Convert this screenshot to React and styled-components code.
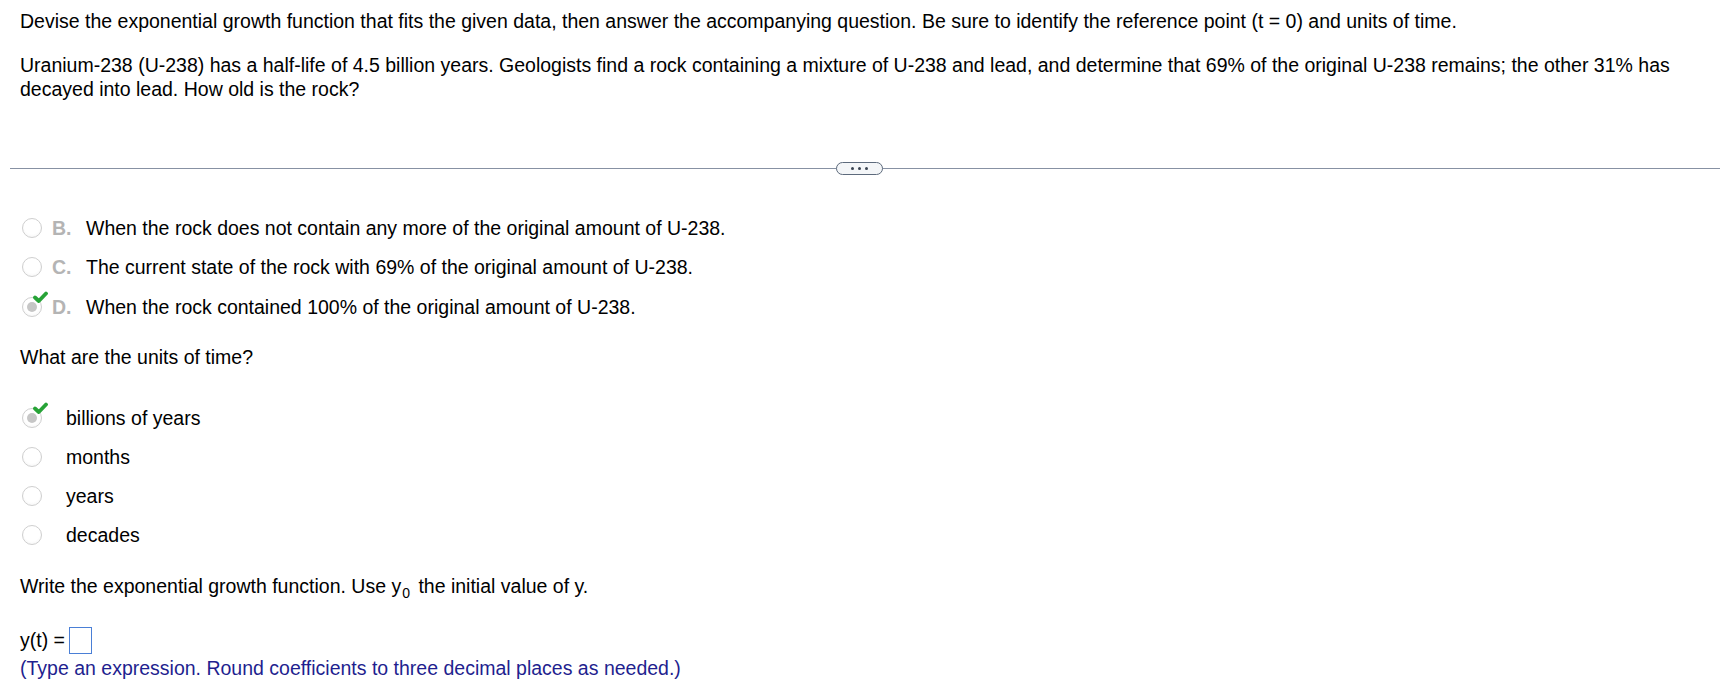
import React from "react";
import styled, { createGlobalStyle } from "styled-components";

const Global = createGlobalStyle`
  html, body { margin: 0; padding: 0; background: #fff; }
  body { font-family: "Liberation Sans", Arial, sans-serif; color: #000; }
`;

const Page = styled.div`
  padding: 9px 20px 0 20px;
  font-size: 19.5px;
  line-height: 24px;
  overflow: hidden;
  height: 679px;
  box-sizing: border-box;
`;

const Para = styled.p`
  margin: ${(p) => p.$mt || 0}px 0 ${(p) => p.$mb || 0}px 0;
`;

const DividerRow = styled.div`
  position: relative;
  margin: 61px -20px 0 -10px;
  height: 13px;
  display: flex;
  align-items: center;
`;

const Line = styled.div`
  flex: 1;
  height: 1px;
  background: #8791a3;
`;

const Pill = styled.button`
  position: absolute;
  left: 826px;
  top: 0;
  width: 47px;
  height: 13px;
  box-sizing: border-box;
  border: 1.5px solid #5d6a7c;
  border-radius: 7px;
  background: #f4f6f8;
  padding: 0;
  display: flex;
  align-items: center;
  justify-content: center;
  gap: 4px;
`;

const Dot = styled.span`
  width: 3px;
  height: 3px;
  border-radius: 50%;
  background: #3a4452;
`;

const OptionList = styled.div`
  display: flex;
  flex-direction: column;
  margin-top: ${(p) => p.$mt}px;
  margin-left: 2px;
`;

const Option = styled.label`
  display: flex;
  align-items: center;
  height: ${(p) => p.$h || 39}px;
`;

const RadioWrap = styled.span`
  position: relative;
  width: 20px;
  height: 20px;
  flex: none;
  margin-right: ${(p) => p.$mr}px;
`;

const RadioCircle = styled.span`
  position: absolute;
  inset: 0;
  border-radius: 50%;
  box-sizing: border-box;
  border: 1.5px solid #cfcfcf;
  background: radial-gradient(circle at 50% 40%, #ffffff 55%, #f0f0f0 100%);
  display: flex;
  align-items: center;
  justify-content: center;
`;

const RadioDot = styled.span`
  width: 10px;
  height: 10px;
  border-radius: 50%;
  background: #c6c6c6;
`;

const Check = styled.svg`
  position: absolute;
  left: 11px;
  top: -6px;
  width: 15px;
  height: 13px;
`;

const Letter = styled.span`
  font-weight: bold;
  color: #b4b4b4;
  width: 34px;
  flex: none;
`;

const Sub = styled.sub`
  font-size: 14px;
  vertical-align: -5px;
  line-height: 0;
  margin: 0 3px 0 1px;
`;

const AnswerRow = styled.div`
  display: flex;
  align-items: center;
  margin-top: 27px;
  height: 30px;
`;

const AnswerLabel = styled.span`
  margin-right: 4px;
`;

const InputBox = styled.span`
  display: inline-block;
  width: 23px;
  height: 27px;
  box-sizing: border-box;
  border: 1.5px solid #4a7fd6;
  background: #fff;
`;

const Hint = styled.div`
  color: #1f1f8f;
  margin-top: 1px;
`;

function Radio({ selected, mr }) {
  return (
    <RadioWrap $mr={mr}>
      <RadioCircle>{selected && <RadioDot />}</RadioCircle>
      {selected && (
        <Check viewBox="0 0 15 13">
          <path d="M2 6.5 L5.8 10 L13 2.5" fill="none" stroke="#27a337" strokeWidth="3.8" strokeLinecap="round" strokeLinejoin="round" />
        </Check>
      )}
    </RadioWrap>
  );
}

const choices = [
  { l: "B.", t: "When the rock does not contain any more of the original amount of U-238.", h: 39 },
  { l: "C.", t: "The current state of the rock with 69% of the original amount of U-238.", h: 39 },
  { l: "D.", t: "When the rock contained 100% of the original amount of U-238.", s: true, h: 41 },
];

const units = [
  { t: "billions of years", s: true },
  { t: "months" },
  { t: "years" },
  { t: "decades" },
];

export default function App() {
  return (
    <>
      <Global />
      <Page>
        <Para $mb={20}>
          Devise the exponential growth function that fits the given data, then answer the accompanying question. Be sure to identify the reference point (t = 0) and units of time.
        </Para>
        <Para>
          Uranium-238 (U-238) has a half-life of 4.5 billion years. Geologists find a rock containing a mixture of U-238 and lead, and determine that 69% of the original U-238 remains; the other 31% has decayed into lead. How old is the rock?
        </Para>
        <DividerRow>
          <Line />
          <Pill aria-label="more">
            <Dot />
            <Dot />
            <Dot />
          </Pill>
        </DividerRow>
        <OptionList $mt={33}>
          {choices.map((c) => (
            <Option key={c.l} $h={c.h}>
              <Radio selected={c.s} mr={10} />
              <Letter>{c.l}</Letter>
              <span>{c.t}</span>
            </Option>
          ))}
        </OptionList>
        <Para $mt={18}>What are the units of time?</Para>
        <OptionList $mt={29}>
          {units.map((u) => (
            <Option key={u.t}>
              <Radio selected={u.s} mr={24} />
              <span>{u.t}</span>
            </Option>
          ))}
        </OptionList>
        <Para $mt={20}>
          Write the exponential growth function. Use y<Sub>0</Sub> the initial value of y.
        </Para>
        <AnswerRow>
          <AnswerLabel>y(t) =</AnswerLabel>
          <InputBox />
        </AnswerRow>
        <Hint>(Type an expression. Round coefficients to three decimal places as needed.)</Hint>
      </Page>
    </>
  );
}
